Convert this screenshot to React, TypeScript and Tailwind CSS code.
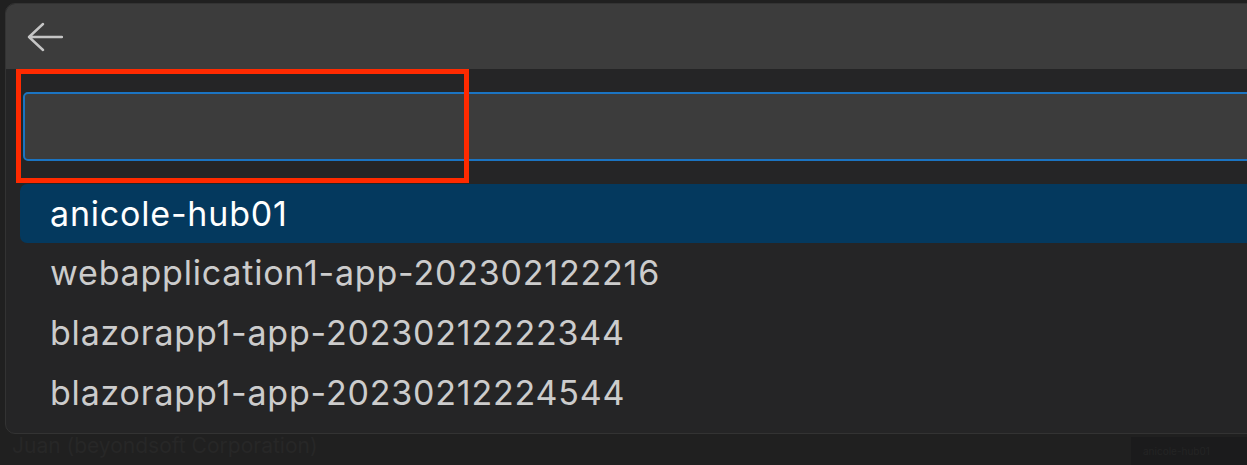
import React from 'react';

const items = [
  'anicole-hub01',
  'webapplication1-app-202302122216',
  'blazorapp1-app-20230212222344',
  'blazorapp1-app-20230212224544',
];

function BackArrow() {
  return (
    <svg width="36" height="30" viewBox="0 0 36 30" fill="none">
      <path
        d="M16 2 L2 15 L16 28 M2 15 H35"
        stroke="#c5c5c5"
        strokeWidth="2.4"
        strokeLinecap="round"
        strokeLinejoin="round"
      />
    </svg>
  );
}

export default function App() {
  return (
    <div
      className="relative h-[465px] w-full overflow-hidden bg-[#202020] pt-[3px]"
      style={{ fontFamily: 'Inter, "Noto Sans", sans-serif' }}
    >
      {/* Quick pick panel */}
      <div className="ml-[5px] h-[431px] w-[1280px] overflow-hidden rounded-[10px] border border-[#333333] bg-[#252526]">
        <div className="flex h-[65px] items-center bg-[#3c3c3c] pl-[21px]">
          <BackArrow />
        </div>

        <div className="px-[17px] pt-[23px]">
          <div className="h-[69px] w-full rounded-[5px] border-2 border-[#1b74c2] bg-[#3c3c3c]" />
        </div>

        <div className="mt-[23px] pl-[14px]">
          {items.map((name, i) => (
            <div
              key={name}
              className={
                i === 0
                  ? 'flex h-[59px] items-center rounded-l-[7px] bg-[#04395e] pl-[30px] text-[34px] leading-none tracking-[0.8px] text-white'
                  : 'flex h-[60px] items-center pl-[30px] text-[34px] leading-none tracking-[0.8px] text-[#cccccc]'
              }
            >
              {name}
            </div>
          ))}
        </div>
      </div>

      {/* faint text behind the panel */}
      <div className="pl-[12px] pt-[1px] text-[21px] leading-[22px] text-[#272727]">
        Juan (beyondsoft Corporation)
      </div>

      <div className="absolute bottom-0 right-0 flex h-[28px] w-[116px] items-center bg-[#1b1b1c] pl-[12px] text-[10px] text-[#242424]">
        anicole-hub01
      </div>

      {/* highlight rectangle drawn over the input */}
      <div className="pointer-events-none absolute left-[16px] top-[69px] h-[114px] w-[453px] border-[5px] border-[#ff2a00]" />
    </div>
  );
}
